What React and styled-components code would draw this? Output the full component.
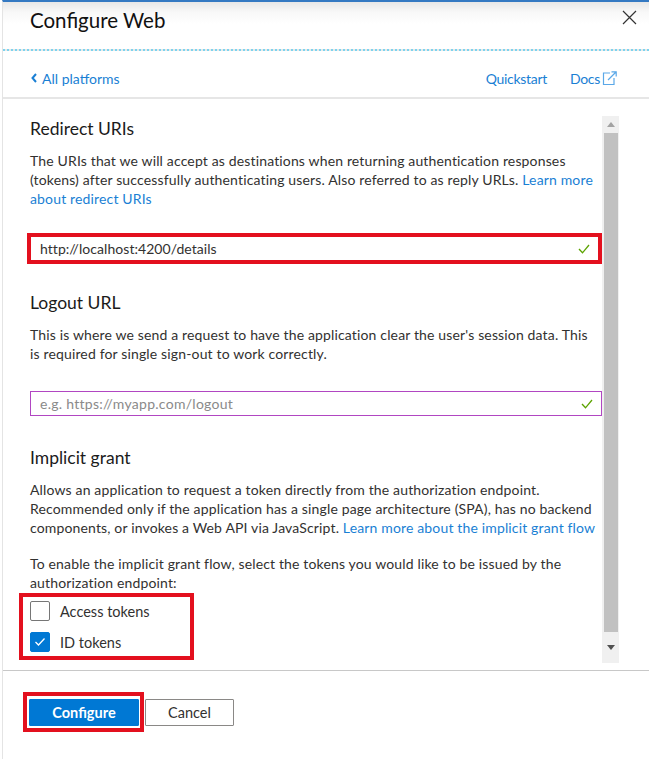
import React from "react";
import styled, { createGlobalStyle } from "styled-components";

const GlobalStyle = createGlobalStyle`
  html, body { margin: 0; padding: 0; background: #fff; }
  body { font-family: Lato, "Liberation Sans", sans-serif; color: #323130; }
  * { box-sizing: border-box; }
`;

const Panel = styled.div`
  width: 647px;
  height: 759px;
  margin-left: 2px;
  border-left: 1px solid #e4e4e4;
  border-top: 2px solid #3479c2;
  background: #fff;
  display: flex;
  flex-direction: column;
  overflow: hidden;
`;

const Header = styled.header`
  height: 49px;
  display: flex;
  justify-content: space-between;
  align-items: flex-start;
  padding: 4px 12px 0 27px;
  background: linear-gradient(to bottom, #e7e7e7 0px, #f8f8f8 10px, #ffffff 22px);
  border-bottom: 2px dotted #7dd3ee;
`;

const Title = styled.h1`
  margin: 0;
  font-size: 20.5px;
  line-height: 28px;
  font-weight: 400;
  color: #111;
`;

const CloseButton = styled.button`
  border: 0;
  background: none;
  padding: 0;
  margin-top: 4px;
  width: 15px;
  height: 15px;
  display: flex;
  cursor: pointer;
`;

const Nav = styled.nav`
  height: 48px;
  padding: 8px 31px 0 28px;
  display: flex;
  align-items: center;
  border-bottom: 2px solid #e6e6e6;
`;

const NavLink = styled.a`
  display: inline-flex;
  align-items: center;
  gap: ${(p) => p.$gap || 0}px;
  color: #1a7fd4;
  font-size: ${(p) => p.$size || 14}px;
  letter-spacing: ${(p) => p.$ls || 0}px;
  text-decoration: none;
  margin-left: ${(p) => p.$ml || 0}px;
  cursor: pointer;
`;

const Spacer = styled.div`
  flex: 1;
`;

const Body = styled.div`
  height: 572px;
  display: flex;
  border-bottom: 1px solid #c8c8c8;
  overflow: hidden;
`;

const Content = styled.div`
  flex: 1;
  padding: 18px 0 0 27px;
  display: flex;
  flex-direction: column;
  align-items: flex-start;
`;

const SectionTitle = styled.h2`
  margin: ${(p) => p.$mt || 0}px 0 0 0;
  font-size: 17.5px;
  line-height: 24px;
  font-weight: 400;
  color: #1b1b1b;
`;

const Para = styled.p`
  margin: ${(p) => p.$mt || 10}px 0 0 0;
  width: 566px;
  font-size: 14px;
  letter-spacing: 0.15px;
  line-height: 19px;
  color: #323130;
`;

const Link = styled.a`
  color: #1a7fd4;
  text-decoration: none;
  cursor: pointer;
`;

const Highlight = styled.div`
  border: ${(p) => p.$w || 3}px solid #e3101e;
  margin: ${(p) => p.$mt || 0}px 0 0 ${(p) => p.$ml || 0}px;
  padding: ${(p) => p.$pad || "0"};
  width: ${(p) => (p.$width ? p.$width + "px" : "auto")};
  display: flex;
  flex-direction: ${(p) => p.$dir || "row"};
  gap: ${(p) => p.$gap || 0}px;
`;

const Field = styled.div`
  width: ${(p) => p.$width}px;
  height: 25px;
  margin-top: ${(p) => p.$mt || 0}px;
  border: 1px solid ${(p) => p.$border || "#bdbdbd"};
  display: flex;
  align-items: center;
  padding: 0 8px 0 9px;
  font-size: 14px;
  letter-spacing: ${(p) => (p.$placeholder ? "0.28px" : "0.05px")};
  color: ${(p) => (p.$placeholder ? "#8a8a8a" : "#323130")};
`;

const FieldText = styled.span`
  flex: 1;
`;

const CheckRow = styled.label`
  height: 28px;
  display: flex;
  align-items: center;
  gap: 10px;
  font-size: 14.5px;
  color: #323130;
  cursor: pointer;
`;

const Box = styled.span`
  width: 20px;
  height: 20px;
  border-radius: 2px;
  border: 1px solid ${(p) => (p.$checked ? "#0078d4" : "#767676")};
  background: ${(p) => (p.$checked ? "#0078d4" : "#fff")};
  display: flex;
  align-items: center;
  justify-content: center;
`;

const Scrollbar = styled.div`
  width: 17px;
  margin: 17px 30px 7px 0;
  background: #f0f0f0;
  display: flex;
  flex-direction: column;
  align-items: center;
`;

const ScrollArrow = styled.div`
  height: ${(p) => p.$h}px;
  width: 100%;
  display: flex;
  align-items: center;
  justify-content: center;
`;

const Thumb = styled.div`
  width: 14px;
  height: 499px;
  background: #c1c1c1;
`;

const Footer = styled.footer`
  flex: 1;
  display: flex;
  align-items: flex-start;
  padding: 21px 0 0 20px;
`;

const ButtonRow = styled.div`
  display: flex;
  align-items: center;
  gap: 1px;
`;

const Button = styled.button`
  height: 27px;
  width: ${(p) => p.$width}px;
  font-family: Lato, "Liberation Sans", sans-serif;
  font-size: 14.5px;
  font-weight: ${(p) => (p.$primary ? 700 : 400)};
  color: ${(p) => (p.$primary ? "#fff" : "#323130")};
  background: ${(p) => (p.$primary ? "#0078d4" : "#fff")};
  border: 1px solid ${(p) => (p.$primary ? "#0078d4" : "#8a8886")};
  border-radius: 1px;
  padding: 0;
  cursor: pointer;
`;

const GreenCheck = () => (
  <svg width="12" height="10" viewBox="0 0 12 10">
    <polyline points="1,5 4.5,8.8 11,1" fill="none" stroke="#5ca300" strokeWidth="1.3" />
  </svg>
);

const Tick = () => (
  <svg width="12" height="10" viewBox="0 0 12 10">
    <polyline points="1.5,5 4.5,8 10.5,1.5" fill="none" stroke="#fff" strokeWidth="1.3" />
  </svg>
);

export default function App() {
  return (
    <>
      <GlobalStyle />
      <Panel>
        <Header>
          <Title>Configure Web</Title>
          <CloseButton aria-label="Close">
            <svg width="15" height="15" viewBox="0 0 15 15">
              <path d="M1 1L14 14M14 1L1 14" stroke="#333" strokeWidth="1.2" fill="none" />
            </svg>
          </CloseButton>
        </Header>
        <Nav>
          <NavLink $gap={5}>
            <svg width="6" height="10" viewBox="0 0 6 10">
              <path d="M5 1L1.5 5L5 9" stroke="#1a7fd4" strokeWidth="2" fill="none" />
            </svg>
            All platforms
          </NavLink>
          <Spacer />
          <NavLink $ls={-0.3}>Quickstart</NavLink>
          <NavLink $ml={23} $gap={1} $ls={-0.3}>
            Docs
            <svg width="17" height="16" viewBox="0 0 17 16">
              <path d="M9 3H2.5V14.5H13V8" stroke="#5aa8e8" strokeWidth="1.2" fill="none" />
              <path d="M7 10L15 2M10.5 1.8H15.2V6.5" stroke="#5aa8e8" strokeWidth="1.2" fill="none" />
            </svg>
          </NavLink>
        </Nav>
        <Body>
          <Content>
            <SectionTitle>Redirect URIs</SectionTitle>
            <Para>
              The URIs that we will accept as destinations when returning authentication responses
              (tokens) after successfully authenticating users. Also referred to as reply URLs.{" "}
              <Link>Learn more about redirect URIs</Link>
            </Para>
            <Highlight $mt={25} $ml={-3} $w={3}>
              <Field $width={569} $border="#e3101e">
                <FieldText>http://localhost:4200/details</FieldText>
                <GreenCheck />
              </Field>
            </Highlight>

            <SectionTitle $mt={27}>Logout URL</SectionTitle>
            <Para>
              This is where we send a request to have the application clear the user's session data.
              This is required for single sign-out to work correctly.
            </Para>
            <Field $width={572} $mt={28} $border="#b146c2" $placeholder>
              <FieldText>e.g. https://myapp.com/logout</FieldText>
              <GreenCheck />
            </Field>

            <SectionTitle $mt={30}>Implicit grant</SectionTitle>
            <Para>
              Allows an application to request a token directly from the authorization endpoint.
              Recommended only if the application has a single page architecture (SPA), has no backend
              components, or invokes a Web API via JavaScript.{" "}
              <Link>Learn more about the implicit grant flow</Link>
            </Para>
            <Para $mt={17}>
              To enable the implicit grant flow, select the tokens you would like to be issued by the
              authorization endpoint:
            </Para>
            <Highlight $mt={1} $ml={-11} $w={4} $width={175} $dir="column" $gap={3} $pad="0 0 0 7px">
              <CheckRow>
                <Box />
                Access tokens
              </CheckRow>
              <CheckRow>
                <Box $checked>
                  <Tick />
                </Box>
                ID tokens
              </CheckRow>
            </Highlight>
          </Content>
          <Scrollbar>
            <ScrollArrow $h={17}>
              <svg width="8" height="5" viewBox="0 0 8 5">
                <path d="M0 5L4 0L8 5Z" fill="#a3a3a3" />
              </svg>
            </ScrollArrow>
            <Thumb />
            <ScrollArrow $h={31}>
              <svg width="8" height="5" viewBox="0 0 8 5">
                <path d="M0 0L8 0L4 5Z" fill="#505050" />
              </svg>
            </ScrollArrow>
          </Scrollbar>
        </Body>
        <Footer>
          <ButtonRow>
            <Highlight $w={4} $pad="3px 1px 2px 2px">
              <Button $primary $width={110}>Configure</Button>
            </Highlight>
            <Button $width={89}>Cancel</Button>
          </ButtonRow>
        </Footer>
      </Panel>
    </>
  );
}
